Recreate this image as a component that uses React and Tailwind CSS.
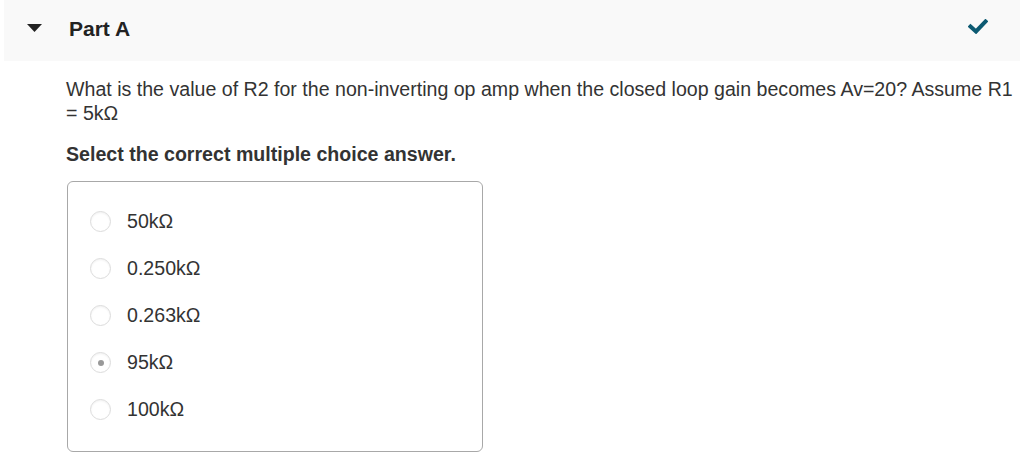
const options = ["50kΩ", "0.250kΩ", "0.263kΩ", "95kΩ", "100kΩ"];

export default function App() {
  const selected = 3;
  return (
    <div className="w-[1024px] h-[466px] bg-white text-[#333] overflow-hidden" style={{ fontFamily: '"Liberation Sans", Arial, sans-serif' }}>
      <div className="mx-[4px] h-[61px] bg-[#f9f9f9] flex items-center">
        <svg width="15" height="8" viewBox="0 0 15 8" className="ml-[23px] mb-[6px]">
          <path d="M0 0 L15 0 L7.5 8 Z" fill="#222" />
        </svg>
        <span className="ml-[27px] mb-[4px] text-[21px] font-bold text-[#222]">Part A</span>
        <svg width="20" height="15" viewBox="0 0 20 15" className="ml-auto mr-[32px] mb-[8px]">
          <path d="M2.5 7.5 L8 12.5 L17.5 2.5" stroke="#0c5a72" strokeWidth="4" fill="none" strokeLinejoin="miter" strokeLinecap="square" />
        </svg>
      </div>
      <div className="pl-[66px] pr-[4px] pt-[16px]">
        <p className="text-[19.6px] leading-[24px]">
          What is the value of R2 for the non-inverting op amp when the closed loop gain becomes Av=20? Assume R1 = 5kΩ
        </p>
        <p className="mt-[17px] text-[19.6px] leading-[24px] font-bold">Select the correct multiple choice answer.</p>
        <div className="mt-[15px] ml-[1px] w-[416px] h-[271px] border border-[#a8a8a8] rounded-[6px] pt-[16px]">
          {options.map((o, i) => (
            <div key={o} className="flex items-center h-[47px] pl-[22px]">
              <span className="w-[21px] h-[21px] rounded-full border border-[#dcdcdc] bg-white flex items-center justify-center shadow-[inset_0_1px_2px_rgba(0,0,0,0.06)]">
                {i === selected && <span className="w-[6px] h-[6px] rounded-full bg-[#999]" />}
              </span>
              <span className="ml-[16px] text-[19.6px]">{o}</span>
            </div>
          ))}
        </div>
      </div>
    </div>
  );
}
